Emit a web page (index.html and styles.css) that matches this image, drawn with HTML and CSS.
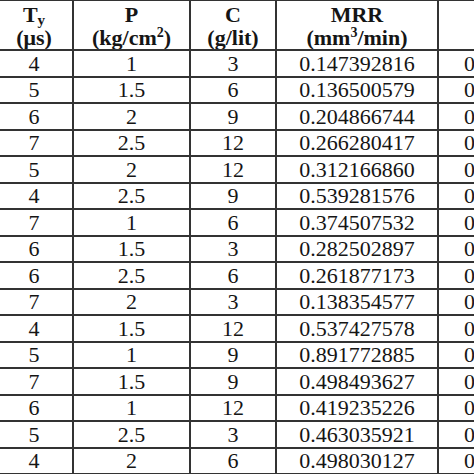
FILE: index.html
```html
<!DOCTYPE html>
<html>
<head>
<meta charset="utf-8">
<link rel="stylesheet" href="styles.css">
</head>
<body>
<div class="frame">
<table class="data">
<colgroup>
<col class="c1"><col class="c2"><col class="c3"><col class="c4"><col class="c5">
</colgroup>
<thead>
<tr>
<th>T<sub>y</sub><br>(μs)</th>
<th>P<br>(kg/cm<sup>2</sup>)</th>
<th>C<br>(g/lit)</th>
<th>MRR<br>(mm<sup>3</sup>/min)</th>
<th class="last"></th>
</tr>
</thead>
<tbody>
<tr><td>4</td><td>1</td><td>3</td><td>0.147392816</td><td class="last">0.0</td></tr>
<tr><td>5</td><td>1.5</td><td>6</td><td>0.136500579</td><td class="last">0.0</td></tr>
<tr><td>6</td><td>2</td><td>9</td><td>0.204866744</td><td class="last">0.0</td></tr>
<tr><td>7</td><td>2.5</td><td>12</td><td>0.266280417</td><td class="last">0.0</td></tr>
<tr><td>5</td><td>2</td><td>12</td><td>0.312166860</td><td class="last">0.0</td></tr>
<tr><td>4</td><td>2.5</td><td>9</td><td>0.539281576</td><td class="last">0.0</td></tr>
<tr><td>7</td><td>1</td><td>6</td><td>0.374507532</td><td class="last">0.0</td></tr>
<tr><td>6</td><td>1.5</td><td>3</td><td>0.282502897</td><td class="last">0.0</td></tr>
<tr><td>6</td><td>2.5</td><td>6</td><td>0.261877173</td><td class="last">0.0</td></tr>
<tr><td>7</td><td>2</td><td>3</td><td>0.138354577</td><td class="last">0.0</td></tr>
<tr><td>4</td><td>1.5</td><td>12</td><td>0.537427578</td><td class="last">0.0</td></tr>
<tr><td>5</td><td>1</td><td>9</td><td>0.891772885</td><td class="last">0.0</td></tr>
<tr><td>7</td><td>1.5</td><td>9</td><td>0.498493627</td><td class="last">0.0</td></tr>
<tr><td>6</td><td>1</td><td>12</td><td>0.419235226</td><td class="last">0.0</td></tr>
<tr><td>5</td><td>2.5</td><td>3</td><td>0.463035921</td><td class="last">0.0</td></tr>
<tr><td>4</td><td>2</td><td>6</td><td>0.498030127</td><td class="last">0.0</td></tr>
</tbody>
</table>
</div>
</body>
</html>
```
FILE: styles.css
```css
html, body {
  margin: 0;
  padding: 0;
  background: #ffffff;
  overflow: hidden;
}
.frame {
  width: 474px;
  height: 474px;
  overflow: hidden;
  position: relative;
}
.data {
  border-collapse: collapse;
  table-layout: fixed;
  width: 603px;
  margin-left: -6px;
  margin-top: -1px;
  font-family: "Liberation Serif", "Times New Roman", serif;
  font-size: 22px;
  color: #151515;
}
.c1 { width: 78px; }
.c2 { width: 117px; }
.c3 { width: 86px; }
.c4 { width: 162px; }
.c5 { width: 160px; }
.data th, .data td {
  border: 2px solid #333;
  padding: 0;
  text-align: center;
  vertical-align: middle;
  line-height: 23px;
  white-space: nowrap;
  overflow: hidden;
}
.data th {
  font-weight: bold;
  height: 48px;
  padding-top: 2px;
  box-sizing: border-box;
}
.data td {
  font-weight: normal;
  height: 24.5px;
}
.data td.last {
  text-align: left;
  padding-left: 25px;
}
.data sub {
  font-size: 15px;
  line-height: 0;
  vertical-align: -3px;
}
.data sup {
  font-size: 14px;
  line-height: 0;
  vertical-align: 8px;
}
```
